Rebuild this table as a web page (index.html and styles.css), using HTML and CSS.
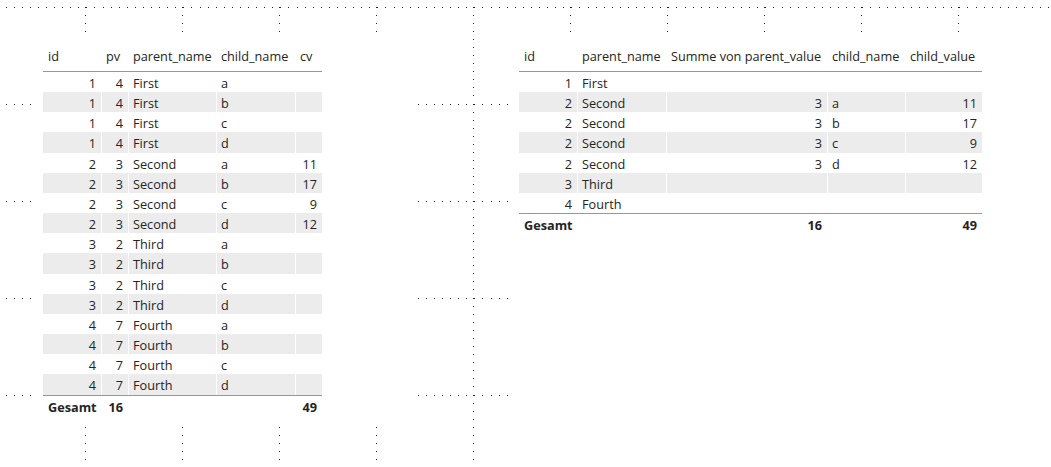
FILE: index.html
```html
<!DOCTYPE html>
<html lang="de">
<head>
  <meta charset="UTF-8" />
  <title>Report</title>
  <link rel="stylesheet" href="styles.css">
</head>
<body>
  <div class="canvas">

    <!-- flat table -->
    <div class="visual visual-left">
      <div class="matrix cols-left">
        <div class="row head">
          <span>id</span><span>pv</span><span>parent_name</span><span>child_name</span><span>cv</span>
        </div>
        <div class="rows">
          <div class="row"><span class="num">1</span><span class="num">4</span><span>First</span><span>a</span><span class="num"></span></div>
          <div class="row"><span class="num">1</span><span class="num">4</span><span>First</span><span>b</span><span class="num"></span></div>
          <div class="row"><span class="num">1</span><span class="num">4</span><span>First</span><span>c</span><span class="num"></span></div>
          <div class="row"><span class="num">1</span><span class="num">4</span><span>First</span><span>d</span><span class="num"></span></div>
          <div class="row"><span class="num">2</span><span class="num">3</span><span>Second</span><span>a</span><span class="num">11</span></div>
          <div class="row"><span class="num">2</span><span class="num">3</span><span>Second</span><span>b</span><span class="num">17</span></div>
          <div class="row"><span class="num">2</span><span class="num">3</span><span>Second</span><span>c</span><span class="num">9</span></div>
          <div class="row"><span class="num">2</span><span class="num">3</span><span>Second</span><span>d</span><span class="num">12</span></div>
          <div class="row"><span class="num">3</span><span class="num">2</span><span>Third</span><span>a</span><span class="num"></span></div>
          <div class="row"><span class="num">3</span><span class="num">2</span><span>Third</span><span>b</span><span class="num"></span></div>
          <div class="row"><span class="num">3</span><span class="num">2</span><span>Third</span><span>c</span><span class="num"></span></div>
          <div class="row"><span class="num">3</span><span class="num">2</span><span>Third</span><span>d</span><span class="num"></span></div>
          <div class="row"><span class="num">4</span><span class="num">7</span><span>Fourth</span><span>a</span><span class="num"></span></div>
          <div class="row"><span class="num">4</span><span class="num">7</span><span>Fourth</span><span>b</span><span class="num"></span></div>
          <div class="row"><span class="num">4</span><span class="num">7</span><span>Fourth</span><span>c</span><span class="num"></span></div>
          <div class="row"><span class="num">4</span><span class="num">7</span><span>Fourth</span><span>d</span><span class="num"></span></div>
        </div>
        <div class="row total">
          <span>Gesamt</span><span class="num">16</span><span></span><span></span><span class="num">49</span>
        </div>
      </div>
    </div>

    <!-- grouped table -->
    <div class="visual visual-right">
      <div class="matrix cols-right">
        <div class="row head">
          <span>id</span><span>parent_name</span><span>Summe von parent_value</span><span>child_name</span><span>child_value</span>
        </div>
        <div class="rows">
          <div class="row"><span class="num">1</span><span>First</span><span class="num"></span><span></span><span class="num"></span></div>
          <div class="row"><span class="num">2</span><span>Second</span><span class="num">3</span><span>a</span><span class="num">11</span></div>
          <div class="row"><span class="num">2</span><span>Second</span><span class="num">3</span><span>b</span><span class="num">17</span></div>
          <div class="row"><span class="num">2</span><span>Second</span><span class="num">3</span><span>c</span><span class="num">9</span></div>
          <div class="row"><span class="num">2</span><span>Second</span><span class="num">3</span><span>d</span><span class="num">12</span></div>
          <div class="row"><span class="num">3</span><span>Third</span><span class="num"></span><span></span><span class="num"></span></div>
          <div class="row"><span class="num">4</span><span>Fourth</span><span class="num"></span><span></span><span class="num"></span></div>
        </div>
        <div class="row total">
          <span>Gesamt</span><span></span><span class="num">16</span><span></span><span class="num">49</span>
        </div>
      </div>
    </div>

  </div>
</body>
</html>
```

FILE: styles.css
```css
:root {
  --text: #252423;
  --stripe: #ececec;
  --accent: #64a2e4;
  --dot: #222;
}

body {
  margin: 0;
  background: #fff;
  font-family: 'Segoe UI', 'Open Sans', sans-serif;
  font-size: 12.7px;
  color: var(--text);
}

/* report canvas with the dotted layout grid */
.canvas {
  position: relative;
  width: 1051px;
  height: 467px;
  overflow: hidden;
  display: flex;
  align-items: flex-start;
}

.canvas::before,
.canvas::after {
  content: "";
  position: absolute;
  inset: 0;
  z-index: 0;
}

/* horizontal dotted lines, every 97px */
.canvas::before {
  background-image: linear-gradient(to right,
    var(--dot) 0 1px, transparent 1px 8px,
    var(--dot) 8px 9px, transparent 9px 16px,
    var(--dot) 16px 17px, transparent 17px 24px,
    var(--dot) 24px 25px, transparent 25px 32px,
    var(--dot) 32px 33px, transparent 33px 40px,
    var(--dot) 40px 41px, transparent 41px 48px,
    var(--dot) 48px 49px, transparent 49px 56px,
    var(--dot) 56px 57px, transparent 57px 64px,
    var(--dot) 64px 65px, transparent 65px 72px,
    var(--dot) 72px 73px, transparent 73px 80px,
    var(--dot) 80px 81px, transparent 81px 88px,
    var(--dot) 88px 89px, transparent 89px);
  background-size: 97px 100%;
  background-position: 6px 0;
  -webkit-mask-image: linear-gradient(#000 0 1px, transparent 1px);
  -webkit-mask-size: 100% 97px;
  -webkit-mask-position: 0 7px;
  mask-image: linear-gradient(#000 0 1px, transparent 1px);
  mask-size: 100% 97px;
  mask-position: 0 7px;
}

/* vertical dotted lines, every 97px */
.canvas::after {
  background-image: linear-gradient(to bottom,
    var(--dot) 0 1px, transparent 1px 8px,
    var(--dot) 8px 9px, transparent 9px 16px,
    var(--dot) 16px 17px, transparent 17px 24px,
    var(--dot) 24px 25px, transparent 25px 32px,
    var(--dot) 32px 33px, transparent 33px 40px,
    var(--dot) 40px 41px, transparent 41px 48px,
    var(--dot) 48px 49px, transparent 49px 56px,
    var(--dot) 56px 57px, transparent 57px 64px,
    var(--dot) 64px 65px, transparent 65px 72px,
    var(--dot) 72px 73px, transparent 73px 80px,
    var(--dot) 80px 81px, transparent 81px 88px,
    var(--dot) 88px 89px, transparent 89px);
  background-size: 100% 97px;
  background-position: 0 7px;
  -webkit-mask-image: linear-gradient(to right, #000 0 1px, transparent 1px);
  -webkit-mask-size: 97px 100%;
  -webkit-mask-position: 85px 0;
  mask-image: linear-gradient(to right, #000 0 1px, transparent 1px);
  mask-size: 97px 100%;
  mask-position: 85px 0;
}

/* visual containers */
.visual {
  position: relative;
  z-index: 1;
  background: #fff;
  box-sizing: border-box;
  margin-top: 35px;
  padding-top: 10px;
}

.visual-left {
  margin-left: 35px;
  width: 379px;
  height: 388px;
  padding-left: 8px;
}

.visual-right {
  margin-left: 96px;
  width: 541px;
  height: 440px;
  padding-left: 9px;
}

/* tables */
.matrix {
  display: inline-block;
}

.row {
  display: grid;
  height: 20.17px;
  line-height: 23px;
  white-space: nowrap;
}

.cols-left .row {
  grid-template-columns: 58px 27px 88px 79px 27px;
}

.cols-right .row {
  grid-template-columns: 58px 89px 161px 78px 77px;
}

.row span {
  box-sizing: border-box;
  padding: 0 5px;
  overflow: hidden;
}

.row span + span {
  border-left: 1px solid #fff;
  padding-left: 4px;
}

.row .num {
  text-align: right;
}

.row.head {
  height: 20px;
  line-height: 22px;
  padding-bottom: 6px;
  border-bottom: 1px solid var(--accent);
}

.row.head span {
  border-left-color: transparent;
}

.rows .row:nth-child(even) {
  background: var(--stripe);
}

.row.total {
  border-top: 1px solid var(--accent);
  font-weight: bold;
}
```
